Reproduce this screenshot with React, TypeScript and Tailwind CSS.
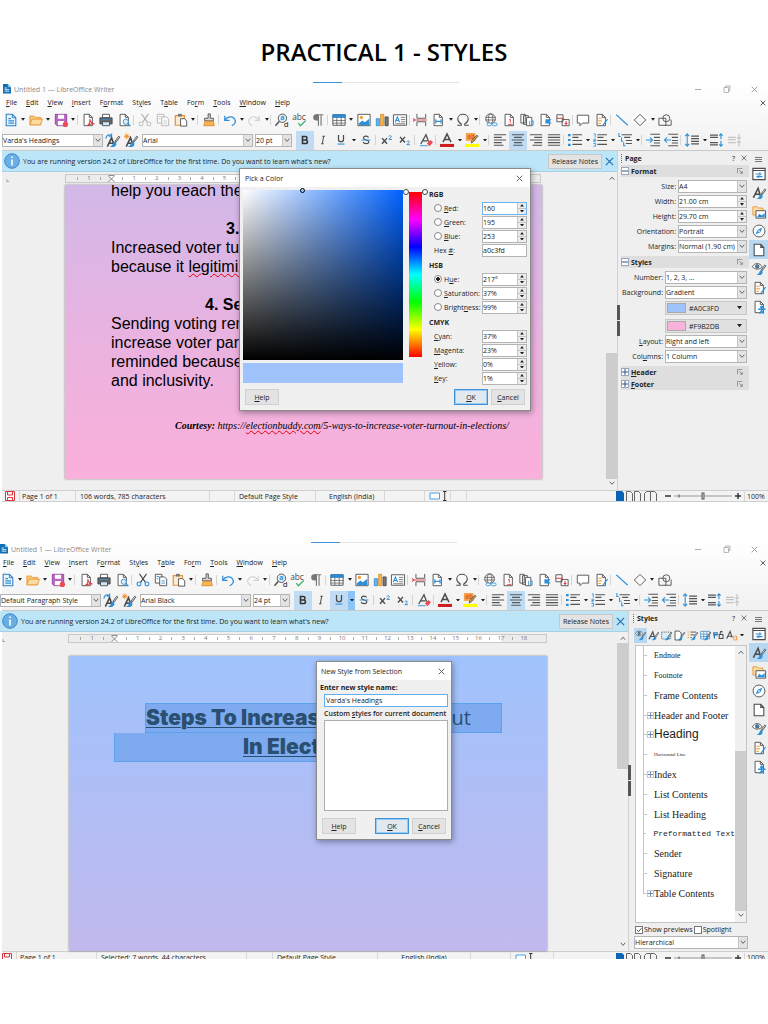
import React from "react";

const GREY = "#4a4a4a";
const BLUE = "#2f8fd6";

const page = <path d="M3.500 1.500h6l3.500 3.500v9.500h-9.500zM9.500 1.500v3.500h3.500" fill="#fff" stroke={GREY} />;
const brush = (
  <>
    <path d="M15.500 3.500l-4.500 6" stroke={GREY} strokeWidth="2.200" />
    <path d="M15 4l-3.500 4.800" stroke="#fff" strokeWidth=".8" />
    <path d="M11 9c-2 0-2 2-3 3.500s-2 1.500-3 1.500c2 1.500 6 1.500 7-1.500.4-1.200 0-2.700-1-3.500z" fill={BLUE} />
  </>
);

const ICONS: Record<string, React.ReactNode> = {
  new: (
    <>
      <path d="M2.500 1.500h7l4 4v9h-11z" fill="#e9f4fc" stroke="#2a7fc0" strokeWidth="1.200" />
      <path d="M9.500 1.500v4h4" stroke="#2a7fc0" />
      <path d="M5 6.500h3M5 9h6.500M5 11.500h6.500" stroke={BLUE} strokeWidth="1.300" />
    </>
  ),
  open: (
    <>
      <path d="M1 3.500h5l1.500 1.500h6v8.500h-12.500z" fill="#f7c978" stroke="#e8963a" />
      <path d="M3.500 7h12l-2.500 6.500h-12z" fill="#fbdc9f" stroke="#e8963a" />
    </>
  ),
  save: (
    <>
      <path d="M1.500 1.500h13v13h-11l-2-2z" fill="#b867c0" stroke="#8f3f9b" />
      <path d="M4.500 2h7v4.500h-7zM4.500 9h7v5h-7z" fill="#fff" />
      <circle cx="13" cy="13" r="3" fill="#ee4a56" />
    </>
  ),
  pdf: (
    <>
      {page}
      <path d="M7 14.500c3-2 3.500-5 3-7.500 1 4 3 5.500 5.500 5.500-3-.5-6 .5-8.500 2z" stroke="#e03a45" strokeWidth="1.200" />
    </>
  ),
  print: (
    <>
      <path d="M4 1.500h8v4h-8z" fill="#fff" stroke={GREY} />
      <path d="M1 5.500h14v7h-14z" fill="#666" stroke={GREY} />
      <path d="M4 10h8v4.500h-8z" fill="#cfe8fa" stroke={GREY} />
      <path d="M3 7.500h10" stroke={BLUE} />
    </>
  ),
  preview: (
    <>
      {page}
      <circle cx="10" cy="10" r="3" fill="#d8eefb" stroke={BLUE} />
      <path d="M12.200 12.200l3 3" stroke={BLUE} strokeWidth="1.500" />
    </>
  ),
  cut: (
    <>
      <path d="M4 1l7 10M12 1L5 11" stroke={GREY} strokeWidth="1.300" />
      <circle cx="3.500" cy="12.500" r="2.200" stroke={BLUE} strokeWidth="1.300" />
      <circle cx="12.500" cy="12.500" r="2.200" stroke={BLUE} strokeWidth="1.300" />
    </>
  ),
  copy: (
    <>
      <path d="M1.500 1.500h7.500v10h-7.500z" fill="#fff" stroke={GREY} />
      <path d="M6.500 4.500h5.500l2.500 2.500v7.500h-8z" fill="#fff" stroke={GREY} />
      <path d="M3 4h3M3 6.500h2M8.500 9h4M8.500 11.500h4" stroke={BLUE} />
    </>
  ),
  paste: (
    <>
      <path d="M1.500 3h10.500v11h-10.500z" fill="#fdebd0" stroke="#e8963a" strokeWidth="1.400" />
      <path d="M4.500 1h4.500v3h-4.500z" fill="#777" />
      <path d="M7.500 6.500h4.500l2.500 2.500v6h-7z" fill="#fff" stroke={GREY} />
    </>
  ),
  brush: (
    <>
      <path d="M7 1h2.500v5h3.500v3h-10v-3h4z" fill="#d9d9d9" stroke={GREY} />
      <path d="M3.500 9.500h9.500l1 5h-12z" fill="#f7b552" stroke="#df8a2a" />
    </>
  ),
  undo: <path d="M2 3v5.500h5.500M2.500 8c2-4 8-5 10.500-1.500s.5 6-3 8" stroke={BLUE} strokeWidth="1.400" />,
  redo: <path d="M14 3v5.500H8.500M13.500 8C11.500 4 5.500 3 3 6.500s-.5 6 3 8" stroke="#9a9a9a" strokeWidth="1.300" />,
  find: (
    <>
      <circle cx="8.500" cy="6" r="4.800" fill="#dceffb" stroke={GREY} />
      <path d="M5 9.500l-4.500 5" stroke={GREY} strokeWidth="1.600" />
      <text x="6" y="8.500" fontSize="8" fontWeight="700" fill={BLUE}>a</text>
      <text x="10" y="15.500" fontSize="9" fontWeight="600" fill={GREY}>d</text>
    </>
  ),
  spell: (
    <>
      <text x="-1" y="7.500" fontSize="9.500" fill={GREY}>abc</text>
      <path d="M6 11.500l2.500 3 6-6" stroke="#3eb36b" strokeWidth="1.500" />
    </>
  ),
  pilcrow: (
    <>
      <path d="M8 1.500H6a3.500 3.500 0 000 7h2z" fill="#777" />
      <path d="M14 2H6M8.500 2v12.500M11.500 2v12.500" stroke="#777" strokeWidth="1.300" />
    </>
  ),
  table: (
    <>
      <path d="M1 2h14v12h-14z" fill="#fff" stroke={GREY} />
      <path d="M1 2h14v3h-14z" fill={BLUE} stroke="#2a7fc0" />
      <path d="M1 8.500h14M1 11.500h14M5.500 5v9M10.500 5v9" stroke={GREY} strokeWidth=".8" />
    </>
  ),
  image: (
    <>
      <path d="M1 1.500h14v13h-14z" fill="#fff" stroke={GREY} />
      <path d="M2 12l4-3.500 3 2 5-4v7.500h-12z" fill={BLUE} />
      <circle cx="5" cy="5" r="2" fill="#f2a33c" />
    </>
  ),
  chart: (
    <>
      <path d="M1.500 6.500h3.500v8h-3.500z" fill="#6fb6ea" stroke={BLUE} />
      <path d="M6.500 1.500h3.500v13h-3.500z" fill="#f7b552" stroke="#df8a2a" />
      <path d="M11.500 4.500h3.500v10h-3.500z" fill="#777" stroke={GREY} />
    </>
  ),
  textbox: (
    <>
      <path d="M.5 2h15v12h-15z" fill="#fff" stroke={GREY} />
      <path d="M2.500 10.500l2.500-6 2.500 6M3.500 8.500h3" stroke={BLUE} strokeWidth="1.200" />
      <path d="M9 5h5M9 7.500h5M9 10h5M2.500 12.300h11.500" stroke={GREY} strokeWidth=".8" />
    </>
  ),
  break: (
    <>
      <path d="M4.500 1v5h10v-5M4.500 15v-5h10v5" stroke={GREY} />
      <path d="M0 8h16M0 6l2.500 2L0 10" stroke="#e03a45" />
    </>
  ),
  field: (
    <>
      {page}
      <path d="M5.500 7v5M11.500 7v5M5.500 9.500h6" stroke={BLUE} strokeWidth="1.400" />
    </>
  ),
  omega: <path d="M1.500 14h4.500v-1.500C3.500 11 2 9 2 6.800 2 3.500 4.800 1.500 8 1.500s6 2 6 5.300c0 2.200-1.500 4.200-4 5.700V14h4.500" stroke={GREY} strokeWidth="1.200" />,
  globe: (
    <>
      <circle cx="7.500" cy="6.500" r="5.500" stroke={GREY} />
      <ellipse cx="7.500" cy="6.500" rx="2.500" ry="5.500" stroke={GREY} strokeWidth=".8" />
      <path d="M2 5h11M2 8h11" stroke={GREY} strokeWidth=".8" />
      <rect x="3.500" y="11.500" width="5" height="3" rx="1.500" fill="#fff" stroke={BLUE} />
      <rect x="9.500" y="11.500" width="5.500" height="3" rx="1.500" fill="#fff" stroke={BLUE} />
    </>
  ),
  footnote: (
    <>
      {page}
      <path d="M8 8l1.500-1v4M7 13h5" stroke="#e03a45" />
    </>
  ),
  endnote: (
    <>
      <path d="M1 1.500h5v10h-5zM4 3h5.500v10h-5.500z" fill="#fff" stroke={GREY} />
      <path d="M7.500 5h6v9.500h-6z" fill="#fff" stroke={GREY} />
      <path d="M11 9v5M13.500 9h1.500v5h-1.500" stroke={BLUE} />
    </>
  ),
  bookmark: (
    <>
      {page}
      <path d="M8.500 7h7l-2 2.500 2 2.500h-7z" fill={BLUE} />
    </>
  ),
  crossref: (
    <>
      <path d="M1 2h7v8h-7zM7 7.500h8v7h-8z" fill="#fff" stroke={GREY} />
      <path d="M1 6h8M11.500 9v4M10 11.500l1.500 1.500 1.500-1.500" stroke="#e03a45" strokeWidth="1.200" />
    </>
  ),
  comment: <path d="M1.500 2.500h13v9h-7l-3 3v-3h-3z" fill="#fff" stroke={GREY} />,
  track: (
    <>
      {page}
      <path d="M5 6h4M5 9h4M5 12h3" stroke="#f2a33c" strokeWidth="1.200" />
      <path d="M15 6.500l-5 6.500-1 2 2-1 5-6.500z" fill={BLUE} />
    </>
  ),
  line: <path d="M1.500 2l13 12" stroke={BLUE} strokeWidth="1.200" />,
  diamond: <path d="M8 1.500l6.500 6.500L8 14.500 1.500 8z" stroke={GREY} />,
  shapes: (
    <>
      <path d="M1 6h8v8h-8z" stroke={GREY} />
      <circle cx="9.500" cy="6" r="4" stroke={GREY} />
      <path d="M15 7.500v6.500h-7" stroke={GREY} />
    </>
  ),
  styleA: (
    <>
      <path d="M1 12.500h2M2 12.500L7 2.500l3 10M3.500 9.500h5.500" stroke={GREY} strokeWidth="1.700" />
      {brush}
    </>
  ),
  styleUpdate: (
    <>
      <path d="M2.500 14.500L7 5l3 9M4 11h5" stroke={GREY} strokeWidth="1.700" />
      <path d="M1 6c0-4 4-5 6-3M7 .5V3.500H4" stroke={BLUE} strokeWidth="1.200" />
      {brush}
    </>
  ),
  styleNew: (
    <>
      <path d="M3.500 14.500L8 5l3 9M5 11h5" stroke={GREY} strokeWidth="1.700" />
      <path d="M4 .5v6M1 3.500h6M2 1.500l4 4M6 1.500l-4 4" stroke="#f08a24" />
      {brush}
    </>
  ),
  bold: <path d="M4 2.500h4.500a2.700 2.700 0 010 5.400h-4.500zM4 7.900h5a2.900 2.900 0 010 5.800h-5z" stroke="#333" strokeWidth="2.500" />,
  italic: <path d="M7 2h4M5 14h4M9 2l-2 12" stroke={GREY} strokeWidth="1.600" />,
  underline: (
    <>
      <path d="M4 0v7c0 5 8 5 8 0V0" stroke={GREY} strokeWidth="2" />
      <path d="M2.500 14.500h11" stroke={BLUE} strokeWidth="1.800" />
    </>
  ),
  strike: (
    <>
      <path d="M12 4c-1-3-8-3-8 .8 0 4 8.500 2.200 8.500 6 0 4-8 4-9 .4" stroke={GREY} strokeWidth="1.800" />
      <path d="M1 8h14" stroke={BLUE} strokeWidth="1.500" />
    </>
  ),
  sup: (
    <>
      <path d="M0 5l8 9M8 5l-8 9" stroke={GREY} strokeWidth="2.200" />
      <path d="M11 2.500c.5-2 4-2 4 .3 0 1.500-4 2.700-4 4.200h5" stroke={BLUE} strokeWidth="1.500" />
    </>
  ),
  sub: (
    <>
      <path d="M0 3l8 9M8 3l-8 9" stroke={GREY} strokeWidth="2.200" />
      <path d="M11 11c.5-2 4-2 4 .3 0 1.500-4 2.700-4 4.200h5" stroke={BLUE} strokeWidth="1.500" />
    </>
  ),
  clear: (
    <>
      <path d="M2 12.500L8 2l3 8M4 9h5.500" stroke={GREY} strokeWidth="1.400" />
      <path d="M1 14.500h9" stroke={BLUE} />
      <path d="M9 12l4-4 3 2.500-4 4.500z" fill="#ee4a56" />
    </>
  ),
  color: (
    <>
      <path d="M3.500 10.500L8 1l4.500 9.500M5 7.500h6" stroke={GREY} strokeWidth="1.700" />
      <path d="M0 12.500h16v3.500h-16z" fill="#cc1f1f" />
    </>
  ),
  highlight: (
    <>
      <path d="M1 0h11v9h-11z" fill="#f7a04e" />
      <text x="2.500" y="7" fontSize="7" fontWeight="700" fill="#d9640f">ab</text>
      <path d="M15 3.500l-6 7-2 1 .5-2.500 6-6.500z" fill="#c99a55" stroke={GREY} strokeWidth=".8" />
      <path d="M0 12.500h16v3.500h-16z" fill="#ffff00" />
    </>
  ),
  left: <path d="M1 2h14M1 5h9M1 8h14M1 11h9M1 14h11" stroke="#555" strokeWidth="1.200" />,
  center: <path d="M1 2h14M3.500 5h9M1 8h14M3.500 11h9M2.500 14h11" stroke="#555" strokeWidth="1.200" />,
  right: <path d="M1 2h14M6 5h9M1 8h14M6 11h9M4 14h11" stroke="#555" strokeWidth="1.200" />,
  justify: <path d="M1 2h14M1 5h14M1 8h14M1 11h14M1 14h14" stroke="#555" strokeWidth="1.200" />,
  bullets: (
    <>
      <path d="M5 2h11M5 5h7M5 8.500h11M5 13h11" stroke="#555" strokeWidth="1.200" />
      <path d="M0 2.500h3M0 8h3M0 13.500h3" stroke={BLUE} strokeWidth="2.500" />
    </>
  ),
  numbers: (
    <>
      <path d="M5 2h11M5 5h7M5 8.500h11M5 13h11" stroke="#555" strokeWidth="1.200" />
      <path d="M1 1h1.500v4M.5 7h2.500v1.500h-2M1 8.500V10h2M.5 12h2.500v3h-2.500" stroke={BLUE} />
    </>
  ),
  outline: (
    <>
      <path d="M4 2h12M7 5h7M9 8.500h7M9 12h7" stroke="#555" strokeWidth="1.200" />
      <path d="M1 0v4h2M4 5v4.500h2M6.500 10.500v4h2" stroke={BLUE} strokeWidth="1.200" />
    </>
  ),
  indent: (
    <>
      <path d="M5 1.500h11M9 5h7M9 8.500h7M9 11.500h7M5 14.500h11" stroke="#555" strokeWidth="1.200" />
      <path d="M0 8h7M4.500 5l3 3-3 3" stroke={BLUE} strokeWidth="1.200" />
    </>
  ),
  outdent: (
    <>
      <path d="M5 1.500h11M9 5h7M9 8.500h7M9 11.500h7M5 14.500h11" stroke="#555" strokeWidth="1.200" />
      <path d="M8 8H1M3.500 5l-3 3 3 3" stroke={BLUE} strokeWidth="1.200" />
    </>
  ),
  spacing: (
    <>
      <path d="M7 3.500h9M7 6.500h9M7 9.500h9M7 12.500h9" stroke="#555" strokeWidth="1.400" />
      <path d="M2.500 1v14M.2 3.500L2.500 1l2.300 2.500M.2 12.500L2.500 15l2.300-2.500" stroke={BLUE} strokeWidth="1.200" />
    </>
  ),
  paraInc: (
    <>
      <path d="M0 2.500h9M0 5h9M0 11h9M0 13.500h9" stroke="#555" strokeWidth="1.300" />
      <path d="M12.500 7V1M10.500 3l2-2 2 2M12.500 9v6M10.500 13l2 2 2-2" stroke={BLUE} strokeWidth="1.300" />
    </>
  ),
  paraDec: (
    <>
      <path d="M0 5h9M0 7.500h9M0 11h9" stroke="#c4c4c4" strokeWidth="1.300" />
      <path d="M12.500 1v6M10.500 5l2 2 2-2M12.500 15V9M10.500 11l2-2 2 2" stroke="#c4c4c4" strokeWidth="1.300" />
    </>
  ),
  props: (
    <>
      <path d="M1 1.500h14v13h-14zM1 4h14" fill="#fff" stroke={GREY} strokeWidth="1.300" />
      <path d="M4 8h7M9 6v4M12 11H5M7 9.500v3" stroke={BLUE} strokeWidth="1.200" />
    </>
  ),
  gallery: (
    <>
      <path d="M1 2h5l1.500 1.500h5v8h-11.500z" fill="#fbdc9f" stroke="#e8963a" />
      <path d="M4.500 6.500h11v8.500h-11z" fill="#fff" stroke={GREY} />
      <path d="M5.500 14l3-4 2.500 2 3.500-3v5z" fill={BLUE} />
    </>
  ),
  compass: (
    <>
      <circle cx="8" cy="8" r="6.800" fill="#fff" stroke={GREY} />
      <path d="M12 4L9.500 9.500 4 12l2.500-5.500z" fill={BLUE} />
      <circle cx="8" cy="8" r="1" fill="#fff" />
    </>
  ),
  blank: <path d="M2.500 1.500h7.500l3.500 3.500v9.500h-11zM10 1.500v3.500h3.500" fill="#fff" stroke={GREY} strokeWidth="1.200" />,
  inspect: (
    <>
      <path d="M.5 5.500C3 .5 9 .5 11.500 5.500c-2.500 3.500-8.500 3.500-11 0z" fill="#fff" stroke={GREY} />
      <circle cx="6" cy="5" r="2" fill={BLUE} stroke={GREY} />
      {brush}
    </>
  ),
  check: (
    <>
      {page}
      <circle cx="11" cy="8" r="1.800" fill={BLUE} />
      <path d="M7 10.500h8.500M11 9v3.500l-2.500 3M11 12.500l2.500 3" stroke={BLUE} strokeWidth="1.800" />
    </>
  ),
  frameStyle: (
    <>
      <path d="M1 3h13v10h-13z" fill="#dceffb" stroke={GREY} strokeDasharray="2 1" />
      {brush}
    </>
  ),
  pageStyle: (
    <>
      <path d="M1.500 1.500h6l3 3v10h-9z" fill="#fff" stroke={GREY} strokeWidth="1.300" />
      {brush}
    </>
  ),
  listStyle: (
    <>
      <path d="M5 3h8M5 7h6M5 11h2" stroke={GREY} strokeWidth="1.300" />
      <path d="M1 3h2M1 7h2M1 11h2" stroke="#f2a33c" strokeWidth="1.600" />
      {brush}
    </>
  ),
  tableStyle: (
    <>
      <path d="M1 2h13v11h-13zM1 6h13M1 9.500h13M5.500 2v11M10 2v11" fill="#fff" stroke="#2a7fc0" />
      {brush}
    </>
  ),
  fill: (
    <>
      <path d="M9 6.500h5.500v6h-5.500zM10.500 6.500v-3c0-2 3-2 3 0" stroke={GREY} strokeWidth="1.500" />
      <path d="M2 12.500v-6h5M1 4h5v3h-5z" stroke="#2a7fc0" strokeWidth="1.800" />
    </>
  ),
  styleActions: (
    <>
      <path d="M1 12.500L6 2l3 9M3 9h5" stroke={GREY} strokeWidth="1.600" />
      <path d="M9.500 9h2v6M13 9h2.500v5.500h-2.500" stroke="#f08a24" strokeWidth="1.300" />
    </>
  ),
};

const LETTERS = ["bold", "italic", "underline", "strike", "sup", "sub"];
const DISABLED = "opacity-40 grayscale";

function Icon({ name, className = "size-[14px]" }: { name: string; className?: string }) {
  return (
    <svg viewBox="0 0 16 16" fill="none" aria-hidden="true" className={`shrink-0 overflow-visible ${className}`}>
      {ICONS[name]}
    </svg>
  );
}

function Down({ className = "w-[4px]" }: { className?: string }) {
  return (
    <svg viewBox="0 0 6 4" className={className} aria-hidden="true">
      <path d="M0 0h6L3 4z" fill="#222" />
    </svg>
  );
}

function Chevron({ up = false }: { up?: boolean }) {
  return (
    <svg viewBox="0 0 8 6" fill="none" className="w-[6px]" aria-hidden="true">
      <path d={up ? "M1 5l3-3.500L7 5" : "M1 1l3 3.500L7 1"} stroke="#555" strokeWidth="1.200" />
    </svg>
  );
}

function Cross({ className, color = "#555" }: { className: string; color?: string }) {
  return (
    <svg viewBox="0 0 10 10" fill="none" className={className} aria-hidden="true">
      <path d="M1 1l8 8M9 1L1 9" stroke={color} strokeWidth="1.300" />
    </svg>
  );
}

/* A text whose access key is marked with a preceding underscore. */
function Key({ t }: { t: string }) {
  const i = t.indexOf("_");
  if (i < 0) return <>{t}</>;
  return (
    <>
      {t.slice(0, i)}
      <span className="underline underline-offset-1">{t[i + 1]}</span>
      {t.slice(i + 2)}
    </>
  );
}

function Combo({ id, label, value, className }: { id?: string; label?: string; value: string; className: string }) {
  return (
    <div className={`relative h-[13px] border border-[#b4b4b4] bg-white ${className}`}>
      <select id={id} aria-label={label} className="block h-full w-full appearance-none bg-transparent pr-[9px] leading-[11px] outline-none">
        <option>{value}</option>
      </select>
      <span className="pointer-events-none absolute inset-y-0 right-0 flex w-[9px] items-center justify-center border-l border-[#c4c4c4] bg-[#e3e3e3]">
        <Chevron />
      </span>
    </div>
  );
}

function Spin({ id, value, className, active = false }: { id: string; value: string; className: string; active?: boolean }) {
  return (
    <div className={`flex h-[13px] border bg-white ${active ? "border-[#6db3ee]" : "border-[#b4b4b4]"} ${className}`}>
      <input id={id} defaultValue={value} className="w-0 min-w-0 flex-1 bg-transparent leading-[11px] outline-none" />
      <span className="flex w-[9px] flex-col border-l border-[#c4c4c4] bg-[#ececec]">
        <button aria-label="Increase" className="flex flex-1 items-center justify-center border-b border-[#c4c4c4]">
          <Down className="w-[4px] rotate-180" />
        </button>
        <button aria-label="Decrease" className="flex flex-1 items-center justify-center">
          <Down className="w-[4px]" />
        </button>
      </span>
    </div>
  );
}

function Tools({ items, on = [], off = [], split = false }: { items: string[]; on?: string[]; off?: string[]; split?: boolean }) {
  return (
    <>
      {items.map((name, i) => {
        if (name === "|") return <span key={i} className="h-[10px] w-[3px] border-l border-[#d4d4d4]" />;
        if (name === "v")
          return (
            <button key={i} aria-label="More" className={`flex h-[19px] w-[7px] items-center justify-center ${split && items[i - 1] === "underline" ? "bg-[#8cc4f5]" : ""}`}>
              <Down />
            </button>
          );
        return (
          <button key={i} aria-label={name} className={`flex h-[19px] w-[18px] min-w-0 items-center justify-center ${on.includes(name) ? "bg-[#c0dcf5]" : ""} ${off.includes(name) ? DISABLED : ""}`}>
            <Icon name={name} className={LETTERS.includes(name) ? "size-[10px]" : "size-[14px]"} />
          </button>
        );
      })}
    </>
  );
}

const MENUS = ["_File", "_Edit", "_View", "_Insert", "F_ormat", "St_yles", "T_able", "Fo_rm", "_Tools", "_Window", "_Help"];
const STANDARD = "new v open v save v | pdf print preview | cut copy paste v | brush | undo v redo v | find spell pilcrow | table v image chart textbox | break field v omega v | globe footnote endnote bookmark crossref | comment track | line diamond v shapes".split(" ");
const FORMAT = "bold italic underline v strike | sup sub | clear | color v highlight v | left center right justify | bullets v numbers v outline v | indent outdent | spacing v paraInc paraDec".split(" ");

function Header({ second = false, style, font, size }: { second?: boolean; style: string; font: string; size: string }) {
  return (
    <header className="border-b border-[#c9c9c9] bg-gradient-to-b from-white to-[#f1f1f1]">
      <div className={second ? "-ml-[3px]" : ""}>
        <div className="flex h-[14px] items-center">
          <svg viewBox="0 0 10 12" className="ml-px w-[8px]" aria-hidden="true">
            <path d="M0 0h6l4 4v8H0z" fill="#0f6fb5" />
            <path d="M6 0l4 4H6z" fill="#7cc3ee" />
            <path d="M2 5h3M2 7h6M2 9h6" stroke="#fff" />
          </svg>
          <span className="ml-[3px] flex-1 text-[#8a8a8a]">Untitled 1 — LibreOffice Writer</span>
          <span className="mr-[10px] flex items-center gap-[20px]">
            <button aria-label="Minimize" className="flex h-[8px] w-[8px] items-center"><span className="h-px w-[6px] bg-[#aaa]" /></button>
            <button aria-label="Restore" className="h-[8px] w-[8px]">
              <svg viewBox="0 0 8 8" fill="none"><path d="M1 2.500h4.500v5H1zM2.500 2.500V1H7v4.500H5.500" stroke="#999" strokeWidth=".7" /></svg>
            </button>
            <button aria-label="Close window"><Cross className="w-[7px]" color="#999" /></button>
          </span>
        </div>
        <nav className="flex h-[13px] items-center gap-[9px] pl-[4px]">
          {MENUS.map((m) => (
            <button key={m}><Key t={m} /></button>
          ))}
          <button aria-label="Close document" className="mr-[2px] ml-auto"><Cross className="w-[6px]" color="#333" /></button>
        </nav>
        <div className="mr-[94px] flex h-[21px] items-center">
          <Tools items={STANDARD} off={second ? ["redo"] : ["cut", "copy", "redo"]} />
        </div>
      </div>
      <div className={`flex h-[20px] items-center ${second ? "-ml-[2px]" : ""}`}>
        <Combo label="Paragraph style" value={style} className="w-[101px] shrink-0" />
        <button aria-label="Update style" className="ml-[2px] w-[18px]"><Icon name="styleUpdate" className="size-[15px]" /></button>
        <button aria-label="New style" className="w-[18px]"><Icon name="styleNew" className="size-[15px]" /></button>
        <Combo label="Font name" value={font} className="ml-px w-[111px] shrink-0" />
        <Combo label="Font size" value={size} className="mr-[4px] ml-[2px] w-[37px] shrink-0" />
        <Tools items={FORMAT} on={second ? ["bold", "underline", "center"] : ["bold", "center"]} split={second} />
      </div>
    </header>
  );
}

function InfoBar() {
  return (
    <div className="flex h-[21px] items-center border-b border-[#a9cfe2] bg-[#bde5f8]">
      <svg viewBox="0 0 16 16" className="ml-[2px] w-[16px]" aria-hidden="true">
        <circle cx="8" cy="8" r="7.300" fill="#6aaee6" stroke="#3f86c6" />
        <path d="M8 3.500v1.500M8 6.500v6" stroke="#fff" strokeWidth="1.600" />
      </svg>
      <span className="ml-[3px] flex-1 whitespace-nowrap">You are running version 24.2 of LibreOffice for the first time. Do you want to learn what&apos;s new?</span>
      <button className="h-[15px] w-[54px] whitespace-nowrap border border-[#c8c8c8] bg-[#e3e3e3]">Release Notes</button>
      <button aria-label="Dismiss" className="mx-[3px]"><Cross className="w-[9px]" color="#2270ad" /></button>
    </div>
  );
}

const RULER = ["1", "", ...Array.from({ length: 18 }, (_, i) => String(i + 1))];

function Ruler() {
  return (
    <div className="flex h-[9px] items-center border border-[#c9c9c9] bg-[linear-gradient(to_right,#ececec_9.500%,#fff_9.500%,#fff_90.500%,#ececec_90.500%)] text-[6px] leading-[7px] text-[#777]">
      <span className="flex-1" />
      {RULER.map((n, i) => (
        <span key={i} className="flex flex-[2] items-center">
          <span className="h-[3px] w-px bg-[#aaa]" />
          <span className="flex flex-1 justify-center">
            {n || <svg viewBox="0 0 8 9" fill="none" className="w-[7px]"><path d="M1 .5h6v1L4 4.500 1 1.500zM1 8.500h6v-1L4 4.500 1 7.500z" fill="#fff" stroke="#777" /></svg>}
          </span>
        </span>
      ))}
      <span className="flex-1" />
    </div>
  );
}

function ScrollBar({ children }: { children?: React.ReactNode }) {
  return (
    <div className="flex w-[11px] shrink-0 flex-col items-center bg-[#f0f0f0] py-[2px]">
      <button aria-label="Scroll up" className="flex h-[9px] items-center"><Chevron up /></button>
      {children}
      <button aria-label="Scroll down" className="flex h-[9px] items-center"><Chevron /></button>
    </div>
  );
}

function SideTabs({ current }: { current: number }) {
  return (
    <nav className="flex w-[19px] shrink-0 flex-col items-center pt-[3px]">
      <button aria-label="Sidebar settings" className="flex h-[10px] flex-col justify-center gap-px">
        {[0, 1, 2].map((i) => <span key={i} className="h-px w-[7px] bg-[#777]" />)}
      </button>
      {["props", "styleA", "gallery", "compass", "blank", "inspect", "track", "check"].map((n, i) => (
        <button key={n} aria-label={n} className={`flex h-[19px] w-full items-center justify-center ${i === current ? "bg-[#b8d8f2]" : ""}`}>
          <Icon name={n} />
        </button>
      ))}
    </nav>
  );
}

function SideHead({ title }: { title: string }) {
  return (
    <div className="flex h-[14px] items-center">
      <span className="mr-[3px] h-[9px] border-l border-dotted border-[#666]" />
      <h2 className="flex-1 font-bold">{title}</h2>
      <button aria-label="Help">?</button>
      <button aria-label="Close deck" className="mr-[2px] ml-[6px]"><Cross className="w-[6px]" /></button>
    </div>
  );
}

function Section({ title, open = false }: { title: string; open?: boolean }) {
  return (
    <div className="flex h-[12px] items-center bg-[#dedede]">
      <button aria-label="Toggle section" className="flex size-[8px] items-center justify-center border border-[#9aa7bb] bg-white">
        <svg viewBox="0 0 6 6" className="size-[6px]"><path d={open ? "M0 3h6" : "M0 3h6M3 0v6"} stroke="#34558b" /></svg>
      </button>
      <h3 className="ml-[2px] flex-1 font-bold"><Key t={title} /></h3>
      <button aria-label="More options" className="mr-[6px]">
        <svg viewBox="0 0 8 8" fill="none" className="w-[6px]"><path d="M.5 7V.5H7M3 3l4 4M7 4v3H4" stroke="#777" /></svg>
      </button>
    </div>
  );
}

function Field({ label, id, narrow = false, children }: { label: string; id: string; narrow?: boolean; children: React.ReactNode }) {
  return (
    <div className="flex h-[15px] items-center">
      <label htmlFor={id} className={`shrink-0 pr-[2px] text-right ${narrow ? "w-[44px]" : "w-[57px]"}`}><Key t={label} /></label>
      {children}
    </div>
  );
}

function ColorButton({ label, swatch }: { label: string; swatch: string }) {
  return (
    <button className="ml-[44px] flex h-[14px] items-center border border-[#c6c6c6] bg-[#e1e1e1] px-px">
      <span className={`h-[10px] w-[19px] border border-[#aaa] ${swatch}`} />
      <span className="ml-[3px] flex-1 text-left">{label}</span>
      <Down className="mr-[3px] w-[5px]" />
    </button>
  );
}

function Gripper() {
  return (
    <div className="absolute top-[154px] left-[-1px] flex w-[3px] flex-col gap-px">
      <span className="h-[15px] bg-[#555]" />
      <span className="h-[15px] bg-[#555]" />
    </div>
  );
}

function PagePanel() {
  return (
    <aside className="relative flex w-[151px] shrink-0 border-l border-[#d0d0d0] bg-[#efefef]">
      <Gripper />
      <div className="flex min-w-0 flex-1 flex-col pl-[3px]">
        <SideHead title="Page" />
        <Section title="Format" open />
        <div className="flex flex-col py-[2px] pr-[2px]">
          <Field id="size" label="Size:"><Combo id="size" value="A4" className="flex-1" /></Field>
          <Field id="width" label="Width:"><Spin id="width" value="21.00 cm" className="flex-1" /></Field>
          <Field id="height" label="Height:"><Spin id="height" value="29.70 cm" className="flex-1" /></Field>
          <Field id="orient" label="Orientation:"><Combo id="orient" value="Portrait" className="flex-1" /></Field>
          <Field id="margins" label="Margins:"><Combo id="margins" value="Normal (1.90 cm)" className="flex-1" /></Field>
        </div>
        <Section title="Styles" open />
        <div className="flex flex-col py-[2px] pr-[2px]">
          <Field narrow id="number" label="Number:"><Combo id="number" value="1, 2, 3, ..." className="flex-1" /></Field>
          <Field narrow id="background" label="Background:"><Combo id="background" value="Gradient" className="flex-1" /></Field>
          <div className="flex flex-col gap-[4px] py-px">
            <ColorButton label="#A0C3FD" swatch="bg-[#a0c3fd]" />
            <ColorButton label="#F9B2DB" swatch="bg-[#f9b2db]" />
          </div>
          <Field narrow id="layout" label="_Layout:"><Combo id="layout" value="Right and left" className="flex-1" /></Field>
          <Field narrow id="columns" label="Col_umns:"><Combo id="columns" value="1 Column" className="flex-1" /></Field>
        </div>
        <Section title="_Header" />
        <Section title="_Footer" />
      </div>
      <SideTabs current={4} />
    </aside>
  );
}

const SERIF = "font-['Liberation_Serif',serif] text-[10px]";
const STYLES: [string, boolean, string][] = [
  ["Endnote", false, "font-['Liberation_Serif',serif] text-[8px]"],
  ["Footnote", false, "font-['Liberation_Serif',serif] text-[8px]"],
  ["Frame Contents", false, SERIF],
  ["Header and Footer", true, SERIF],
  ["Heading", true, "font-['Liberation_Sans',sans-serif] text-[12px]"],
  ["Horizontal Line", false, "font-['Liberation_Serif',serif] text-[5px]"],
  ["Index", true, SERIF],
  ["List Contents", false, SERIF],
  ["List Heading", false, SERIF],
  ["Preformatted Text", false, "font-['Liberation_Mono',monospace] text-[8px]"],
  ["Sender", false, SERIF],
  ["Signature", false, SERIF],
  ["Table Contents", true, SERIF],
];

function StylesPanel() {
  return (
    <aside className="relative flex w-[140px] shrink-0 border-l border-[#d0d0d0] bg-[#efefef]">
      <Gripper />
      <div className="flex min-w-0 flex-1 flex-col pl-[4px]">
        <SideHead title="Styles" />
        <div className="flex h-[20px] items-center pl-px">
          {["inspect", "styleA", "frameStyle", "pageStyle", "listStyle", "tableStyle", "fill", "styleActions"].map((n, i) => (
            <button key={n} aria-label={n} className={`flex h-[15px] w-[13px] items-center justify-center ${i === 0 ? "bg-[#b8d8f2]" : ""}`}>
              <Icon name={n} className="size-[11px]" />
            </button>
          ))}
          <Down className="ml-[2px] w-[4px]" />
        </div>
        <div className="mr-[2px] ml-[2px] flex h-[278px] border border-[#c4c4c4] bg-white">
          <ul className="flex min-w-0 flex-1 flex-col overflow-hidden pb-[19px] pl-[7px] text-[#222]">
            {STYLES.map(([name, plus, cls], i) => (
              <li key={name} className="relative flex flex-1 items-center whitespace-nowrap">
                <span className={`absolute top-0 left-0 border-l border-[#c4c4c4] ${i === 12 ? "h-[10px]" : "h-full"}`} />
                <span className="h-px w-[4px] bg-[#c4c4c4]" />
                <span className={`flex size-[7px] shrink-0 items-center justify-center ${plus ? "border border-[#c3c9d4]" : ""}`}>
                  {plus && <svg viewBox="0 0 5 5" className="size-[5px]"><path d="M0 2.500h5M2.500 0v5" stroke="#7489b0" /></svg>}
                </span>
                <span className={cls}>{name}</span>
              </li>
            ))}
          </ul>
          <ScrollBar>
            <span className="flex-[94]" />
            <span className="w-full flex-[160] bg-[#cdcdcd]" />
          </ScrollBar>
        </div>
        <div className="flex h-[13px] items-center pl-[2px] whitespace-nowrap">
          <span className="relative flex">
            <input id="previews" type="checkbox" defaultChecked className="peer size-[8px] appearance-none border border-[#777] bg-white" />
            <svg viewBox="0 0 8 8" fill="none" className="pointer-events-none invisible absolute inset-0 peer-checked:visible" aria-hidden="true">
              <path d="M1.800 4l1.700 1.700L6.400 2.300" stroke="#333" strokeWidth=".9" />
            </svg>
          </span>
          <label htmlFor="previews" className="ml-px">Show previews</label>
          <input id="spotlight" type="checkbox" className="ml-px size-[8px] appearance-none border border-[#777] bg-white checked:bg-[#777]" />
          <label htmlFor="spotlight" className="ml-px">Spotlight</label>
        </div>
        <Combo label="Style filter" value="Hierarchical" className="mr-px ml-px" />
      </div>
      <SideTabs current={1} />
    </aside>
  );
}

function ViewControls() {
  return (
    <div className="flex shrink-0 items-center">
      <svg viewBox="0 0 42 12" fill="none" className="w-[42px]" aria-label="View layout">
        <path d="M0 1h6l2 2v8H0z" fill="#0b63b5" />
        <path d="M10.500 11V1.500h4l2 2V11M18.500 11V1.500h4l2 2V11M28.500 11V3.500l2-2h4V11M34.500 1.500h4l2 2V11" stroke="#666" />
      </svg>
      <svg viewBox="0 0 76 8" fill="none" className="ml-[7px] w-[76px]" aria-label="Zoom">
        <path d="M0 4h6M70 4h6M73 1v6" stroke="#333" strokeWidth="1.400" />
        <path d="M9 4h58" stroke="#999" />
        <path d="M14 2.500v3" stroke="#555" />
        <rect x="37" y="1" width="2" height="6" fill="#ddd" stroke="#555" />
      </svg>
      <span className="ml-[3px] w-[24px] border-l border-[#d4d4d4] pl-[2px] whitespace-nowrap">100%</span>
    </div>
  );
}

const CELL = "flex h-full shrink-0 items-center border-r border-[#d8d8d8] whitespace-nowrap";

function SaveMark() {
  return (
    <svg viewBox="0 0 10 10" fill="none" className="w-[10px]" aria-hidden="true">
      <path d="M.5.5h9v9h-9zM2.500.5v3.500h5V.500M2.500 9.500v-3h5v3" fill="#fff" stroke="#d9363e" />
    </svg>
  );
}

function SelectionMark() {
  return (
    <svg viewBox="0 0 20 10" fill="none" className="w-[20px]" aria-hidden="true">
      <path d="M1 2h9.500v6H1z" fill="#fff" stroke="#4ba3e3" />
      <path d="M14 .5h3.500M14 9.500h3.500M15.700.5v9" stroke="#333" />
    </svg>
  );
}

function DialogButtons({ className }: { className: string }) {
  const b = "h-[16px] w-[34px] border";
  return (
    <div className={`flex gap-[3px] ${className}`}>
      <button className={`${b} mr-auto border-[#d0d0d0] bg-[#e3e3e3]`}><Key t="_Help" /></button>
      <button className={`${b} border-[#3c93dc] bg-[#e1e8ee] outline outline-[#9accf3] -outline-offset-2`}><Key t="_OK" /></button>
      <button className={`${b} border-[#d0d0d0] bg-[#e3e3e3]`}><Key t="_Cancel" /></button>
    </div>
  );
}

const GROUPS: { title: string; rows: [string, string, boolean][] }[] = [
  { title: "RGB", rows: [["_Red:", "160", true], ["_Green:", "195", true], ["_Blue:", "253", true], ["Hex _#:", "a0c3fd", false]] },
  { title: "HSB", rows: [["H_ue:", "217°", true], ["_Saturation:", "37%", true], ["Bright_ness:", "99%", true]] },
  { title: "CMYK", rows: [["_Cyan:", "37%", false], ["_Magenta:", "23%", false], ["_Yellow:", "0%", false], ["_Key:", "1%", false]] },
];

function ColorDialog() {
  return (
    <div role="dialog" aria-label="Pick a Color" className="absolute top-[86px] left-[237px] w-[292px] border border-[#8a8a8a] bg-[#f0f0f0] shadow-[1px_2px_6px_rgba(0,0,0,0.35)]">
      <div className="flex h-[18px] items-center justify-between bg-white pr-[7px] pl-[5px]">
        <h2>Pick a Color</h2>
        <button aria-label="Close dialog"><Cross className="w-[7px]" /></button>
      </div>
      <div className="flex pt-px pl-[3px]">
        <div className="flex w-[160px] flex-col gap-[3px] pt-[2px]">
          <div className="relative h-[170px] bg-[linear-gradient(to_top,#000,transparent),linear-gradient(to_right,#fff,#0062ff)]">
            <span className="absolute top-[-2px] left-[57px] size-[5px] rounded-full border border-black bg-[#9cf]" />
          </div>
          <div className="h-[20px] bg-[#a0c3fd]" />
        </div>
        <div className="relative mt-[4px] ml-[6px] h-[165px] w-[13px] bg-[linear-gradient(to_bottom,#f00,#f0f,#00f,#0ff,#0f0,#ff0,#f00)]">
          <span className="absolute top-[-3px] left-[-6px] size-[6px] rounded-full border border-[#444] bg-white" />
          <span className="absolute top-[-3px] left-[13px] size-[6px] rounded-full border border-[#444] bg-white" />
        </div>
        <div className="ml-[7px] flex flex-1 flex-col gap-[3px] pt-px pr-[3px]">
          {GROUPS.map((g) => (
            <section key={g.title}>
              <h3 className="h-[12px] leading-[12px] font-bold">{g.title}</h3>
              {g.rows.map(([label, value, radio]) => {
                const id = label.replace(/\W|_/g, "") || "hex";
                return (
                  <div key={label} className="flex h-[14px] items-center">
                    <span className="flex w-[53px] shrink-0 items-center pl-[5px] whitespace-nowrap">
                      {radio && (
                        <input type="radio" name="channel" aria-label={id} defaultChecked={id === "Hue"} className="mr-[2px] size-[8px] shrink-0 appearance-none rounded-full border border-[#888] bg-white checked:bg-[radial-gradient(#222_45%,#fff_50%)]" />
                      )}
                      <label htmlFor={id}><Key t={label} /></label>
                    </span>
                    {label === "Hex _#:" ? (
                      <input id={id} defaultValue={value} className="h-[13px] w-0 min-w-0 flex-1 border border-[#b4b4b4] bg-white leading-[11px]" />
                    ) : (
                      <Spin id={id} value={value} active={value === "160"} className="flex-1" />
                    )}
                  </div>
                );
              })}
            </section>
          ))}
        </div>
      </div>
      <DialogButtons className="px-[5px] pt-[4px] pb-[5px]" />
    </div>
  );
}

function StyleDialog() {
  return (
    <div role="dialog" aria-label="New Style from Selection" className="absolute top-[119px] left-[314px] w-[136px] border border-[#8a8a8a] bg-[#f0f0f0] shadow-[1px_2px_6px_rgba(0,0,0,0.35)]">
      <div className="flex h-[18px] items-center justify-between bg-white pr-[6px] pl-[4px]">
        <h2>New Style from Selection</h2>
        <button aria-label="Close dialog"><Cross className="w-[7px]" /></button>
      </div>
      <div className="flex flex-col px-[3px] pt-[2px]">
        <label htmlFor="style-name" className="h-[12px] leading-[12px] font-bold">Enter new style name:</label>
        <input id="style-name" defaultValue="Varda's Headings" className="ml-[4px] h-[13px] min-w-0 border border-[#5fb0ec] bg-white pl-px outline-none" />
        <span className="ml-[4px] h-[13px] leading-[13px] font-semibold whitespace-nowrap"><Key t="Custom _styles for current document" /></span>
        <div className="ml-[4px] h-[91px] border border-[#adadad] bg-white" />
      </div>
      <DialogButtons className="px-[5px] pt-[7px] pb-[5px]" />
    </div>
  );
}

function Progress({ className }: { className: string }) {
  return (
    <div className={`absolute top-0 flex h-px w-[146px] bg-[#e2e2e2] ${className}`}>
      <span className="w-[29px] bg-[#3c93dc]" />
    </div>
  );
}

const WAVY = "underline decoration-red-600 decoration-wavy decoration-[1px] underline-offset-1";

export default function App() {
  return (
    <main className="min-h-screen overflow-hidden bg-white pb-[64px] font-['Open_Sans','Noto_Sans',sans-serif] text-[7px] leading-[9px] text-[#222]">
      <h1 className="flex h-[82px] items-center justify-center pt-[20px] text-[24px] font-semibold text-black">PRACTICAL 1 - STYLES</h1>

      <section className="relative ml-[2px]">
        <Header style="Varda's Headings" font="Arial" size="20 pt" />
        <Progress className="left-[311px]" />
        <div className="flex h-[339px]">
          <div className="flex min-w-0 flex-1 flex-col">
            <InfoBar />
            <div className="flex flex-1">
              <div className="flex min-w-0 flex-1 flex-col bg-[#efefef]">
                <div className="flex pt-[2px]">
                  <span className="w-[63px] pl-[4px] text-[#555]">⌞</span>
                  <div className="mr-[65px] flex-1"><Ruler /></div>
                </div>
                <article className="mt-[2px] mr-[64px] ml-[63px] h-[294px] overflow-hidden bg-[linear-gradient(to_bottom,#d2b8e8,#edb2df_60%,#fab0da)] pl-[46px] font-['Liberation_Sans',sans-serif] text-[16px] leading-[19px] text-black shadow-[0_0_2px_rgba(0,0,0,0.45)]">
                  <div className="-mt-[4px] whitespace-nowrap">
                    <p>help you reach the</p>
                    <h2 className="mt-[19px] pl-[115px] font-bold">3. Vot</h2>
                    <p>Increased voter turn</p>
                    <p>because it <span className={WAVY}>legitimizes</span></p>
                    <h2 className="mt-[19px] pl-[94px] font-bold">4. Send</h2>
                    <p>Sending voting remin</p>
                    <p>increase voter partic</p>
                    <p>reminded because it</p>
                    <p>and inclusivity.</p>
                    <p className="mt-[26px] pl-[64px] font-['Liberation_Serif',serif] text-[10px] italic">
                      <b>Courtesy:</b> https://<span className={WAVY}>electionbuddy.com</span>/5-ways-to-increase-voter-turnout-in-elections/
                    </p>
                  </div>
                </article>
              </div>
              <ScrollBar>
                <span className="flex-[170]" />
                <span className="w-full flex-[126] bg-[#cdcdcd]" />
              </ScrollBar>
            </div>
          </div>
          <PagePanel />
        </div>
        <footer className="flex h-[12px] items-center border-y border-[#cfcfcf] bg-[#f3f3f3]">
          <span className={`${CELL} w-[18px] pl-[3px]`}><SaveMark /></span>
          <span className={`${CELL} w-[56px] pl-[2px]`}>Page 1 of 1</span>
          <span className={`${CELL} w-[134px] pl-[4px]`}>106 words, 785 characters</span>
          <span className={`${CELL} w-[25px]`} />
          <span className={`${CELL} w-[81px] pl-[4px]`}>Default Page Style</span>
          <span className={`${CELL} w-[69px] pl-[13px]`}>English (India)</span>
          <span className={`${CELL} w-[40px]`} />
          <span className={`${CELL} w-[26px] pl-[4px]`}><SelectionMark /></span>
          <span className={`${CELL} w-[16px]`} />
          <span className="flex-1" />
          <ViewControls />
        </footer>
        <ColorDialog />
      </section>

      <section className="relative mt-[40px] ml-[2px]">
        <Header second style="Default Paragraph Style" font="Arial Black" size="24 pt" />
        <Progress className="left-[309px]" />
        <div className="flex h-[340px]">
          <div className="flex min-w-0 flex-1 flex-col">
            <div className="-ml-[2px]"><InfoBar /></div>
            <div className="flex flex-1">
              <div className="flex min-w-0 flex-1 flex-col bg-[#efefef]">
                <div className="flex pt-[2px]">
                  <span className="w-[66px] text-[#555]">⌞</span>
                  <div className="mr-[70px] flex-1"><Ruler /></div>
                </div>
                <article className="mt-[13px] mr-[70px] ml-[67px] flex-1 bg-[linear-gradient(to_bottom,#a0c3fd,#c1b9ed)] pt-[47px] pl-[45px] font-['Inter','Open_Sans',sans-serif] text-[21px] leading-[28px] font-black whitespace-nowrap text-[#2b4f70] shadow-[0_0_2px_rgba(0,0,0,0.45)]">
                  <p className="mr-[45px] ml-[31px] flex justify-between border border-[#5ba2ee] bg-[#7eabf0] pr-[30px]">
                    <span className="underline decoration-1 underline-offset-2">Steps To Increas</span>
                    <span className="font-['Open_Sans',sans-serif] text-[20px] font-normal">ut</span>
                  </p>
                  <p className="w-[240px] border border-t-0 border-[#5ba2ee] bg-[#7eabf0] pl-[128px]">
                    <span className="underline decoration-1 underline-offset-2">In Elect</span>
                  </p>
                </article>
              </div>
              <ScrollBar>
                <span className="w-full flex-[126] bg-[#cdcdcd]" />
                <span className="flex-[171]" />
              </ScrollBar>
            </div>
          </div>
          <StylesPanel />
        </div>
        <footer className="h-[8px] overflow-hidden">
          <div className="flex h-[12px] items-center border-t border-[#cfcfcf] bg-[#f3f3f3]">
            <span className={`${CELL} w-[15px]`}><SaveMark /></span>
            <span className={`${CELL} w-[80px] pl-[3px]`}>Page 1 of 1</span>
            <span className={`${CELL} w-[150px] pl-[4px]`}>Selected: 7 words, 44 characters</span>
            <span className={`${CELL} w-[26px]`} />
            <span className={`${CELL} w-[105px] pl-[4px]`}>Default Page Style</span>
            <span className={`${CELL} w-[93px] justify-center`}>English (India)</span>
            <span className={`${CELL} w-[40px]`} />
            <span className={`${CELL} w-[43px] pl-[4px]`}><SelectionMark /></span>
            <span className="flex-1" />
            <ViewControls />
          </div>
        </footer>
        <StyleDialog />
      </section>
    </main>
  );
}
